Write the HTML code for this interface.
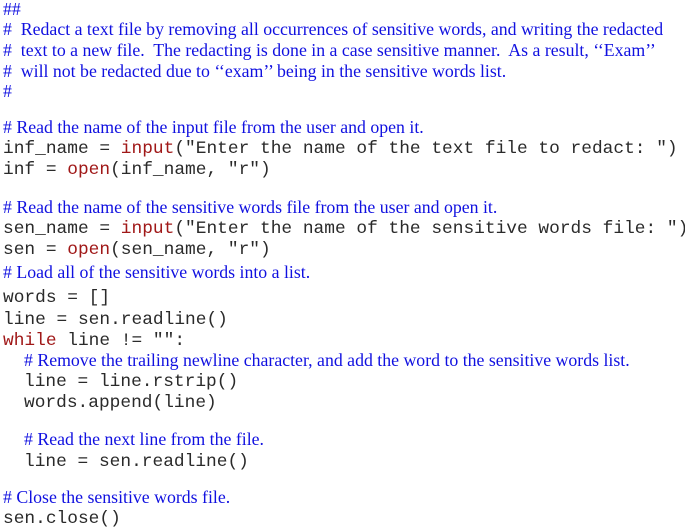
<!DOCTYPE html>
<html><head><meta charset="utf-8"><style>
body{margin:0;width:685px;height:525px;background:#fff;position:relative;overflow:hidden}
div{position:absolute;left:3px;white-space:pre;line-height:20px}
.c{font-family:"Liberation Serif",serif;font-size:17.8px;color:#1010e0}
.m{font-family:"Liberation Mono",monospace;font-size:17.85px;color:#2a2a2a;margin-top:2px}
.k{color:#a01818}
.i{left:24px}
</style></head><body>
<div class="c" style="top:-1px">##</div>
<div class="c" style="top:19px">#  Redact a text file by removing all occurrences of sensitive words, and writing the redacted</div>
<div class="c" style="top:40px">#  text to a new file.  The redacting is done in a case sensitive manner.  As a result, ‘‘Exam’’</div>
<div class="c" style="top:61px">#  will not be redacted due to ‘‘exam’’ being in the sensitive words list.</div>
<div class="c" style="top:81px">#</div>
<div class="c" style="top:117px"># Read the name of the input file from the user and open it.</div>
<div class="m" style="top:137px">inf_name = <span class="k">input</span>("Enter the name of the text file to redact: ")</div>
<div class="m" style="top:158px">inf = <span class="k">open</span>(inf_name, "r")</div>
<div class="c" style="top:197px"># Read the name of the sensitive words file from the user and open it.</div>
<div class="m" style="top:217px">sen_name = <span class="k">input</span>("Enter the name of the sensitive words file: ")</div>
<div class="m" style="top:238px">sen = <span class="k">open</span>(sen_name, "r")</div>
<div class="c" style="top:262px"># Load all of the sensitive words into a list.</div>
<div class="m" style="top:286px">words = []</div>
<div class="m" style="top:308px">line = sen.readline()</div>
<div class="m" style="top:329px"><span class="k">while</span> line != "":</div>
<div class="c i" style="top:350px"># Remove the trailing newline character, and add the word to the sensitive words list.</div>
<div class="m i" style="top:370px">line = line.rstrip()</div>
<div class="m i" style="top:391px">words.append(line)</div>
<div class="c i" style="top:429px"># Read the next line from the file.</div>
<div class="m i" style="top:450px">line = sen.readline()</div>
<div class="c" style="top:487px"># Close the sensitive words file.</div>
<div class="m" style="top:507px">sen.close()</div>
</body></html>
